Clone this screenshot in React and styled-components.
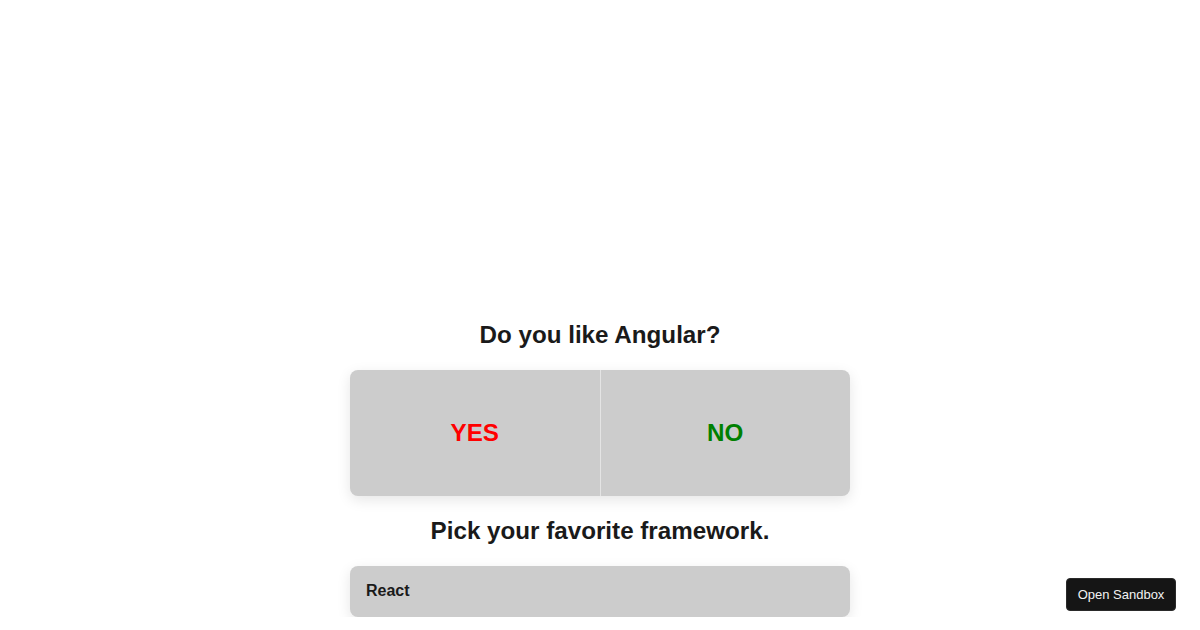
import styled, { createGlobalStyle } from "styled-components";

const GlobalStyle = createGlobalStyle`
    body {
        margin: 0;
        background: #ffffff;
        font-family: "Liberation Sans", Arial, sans-serif;
        color: #1a1a1a;
    }
`;

const Page = styled.div`
    display: flex;
    flex-direction: column;
    align-items: center;
    gap: 20px;
    padding-top: 319.6px;
`;

const Question = styled.h2`
    margin: 0;
    font-size: 24.2px;
    line-height: 30px;
    font-weight: 700;
    text-align: center;
`;

const Card = styled.div`
    width: 500px;
    background: #cccccc;
    border-radius: 8px;
    box-shadow: 0 4px 14px rgba(0, 0, 0, 0.1);
    overflow: hidden;
`;

const Choices = styled(Card)`
    display: flex;
    height: 126.6px;
`;

const Choice = styled.button`
    flex: 1;
    border: none;
    background: transparent;
    font-family: inherit;
    font-size: 24.2px;
    font-weight: 700;
    color: ${(p) => p.color};
    cursor: pointer;

    & + & {
        border-left: 1px solid #e4e4e4;
    }
`;

const Option = styled(Card)`
    height: 50.6px;
    display: flex;
    align-items: center;
    padding: 0 16px;
    box-sizing: border-box;
    font-size: 16px;
    font-weight: 700;
`;

const SandboxButton = styled.button`
    position: fixed;
    right: 24px;
    bottom: 19px;
    width: 110px;
    height: 33px;
    border: 1px solid #2a2a2a;
    border-radius: 4px;
    background: #151515;
    color: #f2f2f2;
    font-family: "Liberation Sans", Arial, sans-serif;
    font-size: 13px;
    cursor: pointer;
`;

const App = () => {
    return (
        <>
            <GlobalStyle />
            <Page>
                <Question>Do you like Angular?</Question>
                <Choices>
                    <Choice color="#ff0000">YES</Choice>
                    <Choice color="#008000">NO</Choice>
                </Choices>
                <Question>Pick your favorite framework.</Question>
                <Option>React</Option>
            </Page>
            <SandboxButton>Open Sandbox</SandboxButton>
        </>
    );
};

export default App;
